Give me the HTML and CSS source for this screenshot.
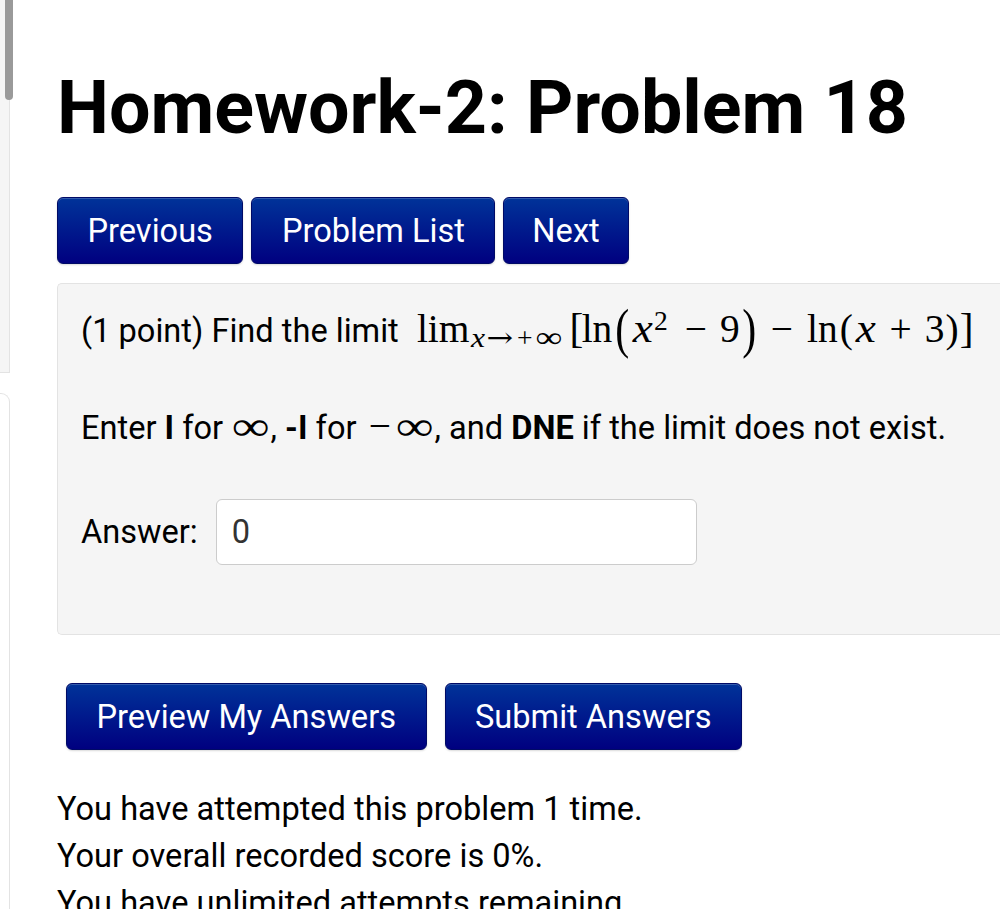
FILE: index.html
```html
<!DOCTYPE html>
<html>
<head>
<meta charset="utf-8">
<link rel="stylesheet" href="styles.css">
</head>
<body>
<div class="page">
  <aside class="side">
    <div class="side-top"></div>
    <div class="side-bottom"></div>
  </aside>
  <div class="scrollbar"></div>
  <main class="main">
    <h1 class="title">Homework-2: Problem 18</h1>
    <nav class="nav">
      <a class="btn">Previous</a>
      <a class="btn">Problem List</a>
      <a class="btn">Next</a>
    </nav>
    <section class="problem">
      <p class="line first">(1 point) Find the limit <span class="math"><span class="a w-lim">lim</span><span class="sub"><span class="a w-x"><i class="vx">x</i></span><span class="a w-1 arrow">→</span><span class="a w-pl">+</span><span class="a w-1 inf-s">∞</span></span><span class="a w-thin"></span><span class="a w-brk">[</span><span class="a w-ln">ln</span><span class="a w-bp bigp">(</span><span class="a w-x"><i class="vx">x</i></span><span class="a w-sup sup">2</span><span class="a w-bin">−</span><span class="a w-d">9</span><span class="a w-bp bigp">)</span><span class="a w-bin">−</span><span class="a w-ln">ln</span><span class="a w-p">(</span><span class="a w-x"><i class="vx">x</i></span><span class="a w-bin">+</span><span class="a w-d">3</span><span class="a w-p">)</span><span class="a w-brk">]</span></span></p>
      <p class="line second">Enter <b>I</b> for <span class="imath"><span class="a w-1 inf">∞</span></span>, <b>-I</b> for <span class="imath"><span class="a w-mn">−</span><span class="a w-1 inf">∞</span></span>, and <b>DNE</b> if the limit does not exist.</p>
      <div class="answer">
        <label class="label">Answer:</label>
        <div class="input">0</div>
      </div>
    </section>
    <div class="actions">
      <a class="btn">Preview My Answers</a>
      <a class="btn">Submit Answers</a>
    </div>
    <div class="status">
      <p>You have attempted this problem 1 time.</p>
      <p>Your overall recorded score is 0%.</p>
      <p>You have unlimited attempts remaining.</p>
    </div>
  </main>
</div>
</body>
</html>
```
FILE: styles.css
```css
html, body {
  margin: 0;
  padding: 0;
  background: #fff;
  overflow: hidden;
  height: 909px;
}
body {
  font-family: Roboto, "Liberation Sans", sans-serif;
  font-size: 32.6px;
  color: #000;
}
.page {
  display: flex;
  position: relative;
}
.side {
  width: 10px;
  flex: none;
  display: flex;
  flex-direction: column;
}
.side-top {
  height: 373px;
  background: #f5f5f5;
  border-right: 1px solid #e3e3e3;
  border-bottom: 1px solid #e3e3e3;
  box-sizing: border-box;
}
.side-bottom {
  margin-top: 20px;
  height: 600px;
  border-top: 1px solid #e3e3e3;
  border-right: 1px solid #e3e3e3;
  border-top-right-radius: 9px;
  box-sizing: border-box;
}
.scrollbar {
  position: absolute;
  left: 5px;
  top: 0;
  width: 8px;
  height: 100px;
  background: #9a9a9a;
  border-radius: 0 0 4px 4px;
}
.main {
  margin-left: 47px;
  flex: 1;
  min-width: 0;
}
.title {
  font-size: 73.6px;
  font-weight: 700;
  line-height: 84px;
  margin: 66px 0 0 0;
}
.nav {
  display: flex;
  gap: 8px;
  margin-top: 47px;
}
.btn {
  display: inline-flex;
  align-items: center;
  justify-content: center;
  height: 67px;
  box-sizing: border-box;
  padding: 0 29.5px;
  color: #fff;
  font-size: 32.6px;
  border-radius: 6px;
  background: linear-gradient(#003399, #000080);
  border: 1px solid #000a66;
  box-shadow: inset 0 1px 0 rgba(255,255,255,0.2), 0 1px 2px rgba(0,0,0,0.15);
}
.nav .btn:nth-child(3) { padding: 0 28px; }
.problem {
  margin-top: 19px;
  background: #f5f5f5;
  border: 1px solid #e3e3e3;
  border-right: none;
  border-radius: 5px 0 0 5px;
  padding: 23px 0 0 23px;
  height: 352px;
  box-sizing: border-box;
  white-space: nowrap;
}
.line {
  margin: 0;
  line-height: 48px;
}
.line.second {
  margin-top: 49px;
}
.math, .imath {
  font-family: "Liberation Serif", "DejaVu Serif", serif;
  font-size: 39.4px;
  line-height: 0;
}
.math { margin-left: 9px; }
.a {
  display: inline-block;
  text-align: center;
  line-height: 0;
}
.math i { font-style: italic; }
.vx { display: inline-block; transform: scaleX(1.15); }
.w-lim { width: 1.389em; }
.w-x { width: 0.572em; }
.w-1 { width: 1em; }
.w-pl { width: 0.778em; }
.w-thin { width: 0.167em; }
.w-brk { width: 0.265em; font-size: 1.05em; }
.w-ln { width: 0.834em; }
.w-bp { width: 0.3225em; }
.w-p { width: 0.389em; }
.w-d { width: 0.5em; }
.w-bin { width: 1.222em; }
.w-mn { width: 0.778em; }
.w-sup { width: 0.5em; margin-right: 0.15em; }
.sub {
  font-size: 27.6px;
  vertical-align: -5px;
}
.arrow { font-family: "DejaVu Serif", serif; transform: scaleX(1.15); }
.inf-s, .inf { transform: scale(1.35, 1.05); }
.sup {
  font-size: 27.6px;
  vertical-align: 12px;
}
.bigp {
  font-size: 1.42em;
  vertical-align: -5px;
  transform: scaleX(0.75);
}
.answer {
  display: flex;
  align-items: center;
  margin-top: 47px;
}
.label { margin-right: 18px; }
.input {
  width: 481px;
  height: 66px;
  box-sizing: border-box;
  background: #fff;
  border: 1px solid #cccccc;
  border-radius: 6px;
  color: #333;
  padding: 0 15px;
  display: flex;
  align-items: center;
}
.actions {
  display: flex;
  gap: 18px;
  margin: 48px 0 0 9px;
}
.status {
  margin-top: 36px;
}
.status p {
  margin: 0;
  line-height: 47px;
}
```
